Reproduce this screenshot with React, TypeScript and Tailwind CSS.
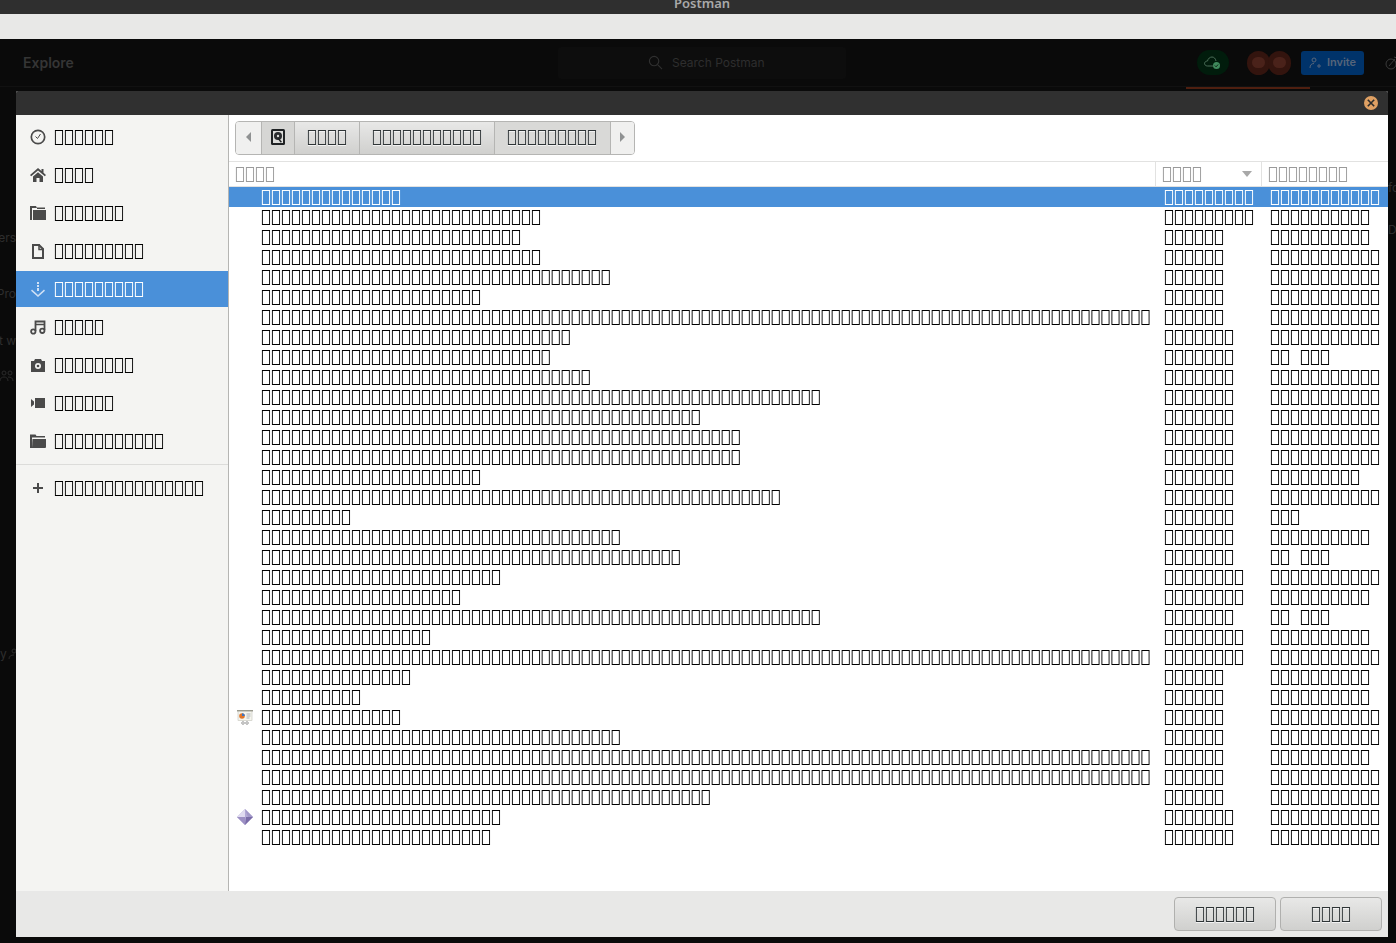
import type { ReactNode } from 'react';

// the original labels are in a script with no installed font, so they show as missing-glyph boxes
const box = (n: number) => '\uE000'.repeat(n);

const ICON_CLASS = 'w-4 h-4 shrink-0';

const ClockIcon = () => (
  <svg viewBox="0 0 16 16" className={ICON_CLASS} fill="none" stroke="#4a4a4a">
    <circle cx="8" cy="8" r="6.700" strokeWidth="1.700" />
    <path d="M5.500 7.500 7.500 9.500 10.500 5" strokeWidth="1" />
  </svg>
);
const HomeIcon = () => (
  <svg viewBox="0 0 16 16" className={ICON_CLASS} fill="#4a4a4a">
    <path d="M8 1 0 8l1.200 1.300L8 3.500l6.800 5.800L16 8l-2.500-2.200V2h-2v2.100z" />
    <path d="M3 9.500V15h3.500v-4h3v4H13V9.500L8 5.200z" />
  </svg>
);
const FolderIcon = () => (
  <svg viewBox="0 0 16 16" className={ICON_CLASS} fill="#4a4a4a">
    <path d="M0 1h6l1 2h-5v12H0z" />
    <path d="M3 5h13v10H3z" />
    <path d="M7 2.500h8V4H7z" />
  </svg>
);
const FileIcon = () => (
  <svg viewBox="0 0 16 16" className={ICON_CLASS} fill="none" stroke="#4a4a4a" strokeWidth="2">
    <path d="M3 2h6l4 4v9H3z" />
    <path d="M9 1v5.500h5" strokeWidth="1.500" />
  </svg>
);
const DownloadIcon = () => (
  <svg viewBox="0 0 16 16" className={ICON_CLASS} fill="#cfe0f5">
    <path d="M7 1h2v2H7zM7 4h2v2H7zM7 7h2v3H7z" />
    <path d="M2 8.500 8 14l6-5.500 1 1.200L8 16 1 9.700z" />
  </svg>
);
const MusicIcon = () => (
  <svg viewBox="0 0 16 16" className={ICON_CLASS} fill="none" stroke="#4a4a4a" strokeWidth="1.800">
    <path d="M5.500 12V2.500h9V11" />
    <path d="M5.500 5.500h9" strokeWidth="1.500" />
    <circle cx="3.300" cy="12.500" r="2.200" />
    <circle cx="12.300" cy="11.800" r="2.200" />
  </svg>
);
const CameraIcon = () => (
  <svg viewBox="0 0 16 16" className={ICON_CLASS}>
    <path fill="#4a4a4a" d="M1 4h3l1-2h6l1 2h3v11H1z" />
    <circle cx="8" cy="9" r="3" fill="#f4f4f2" />
    <circle cx="8" cy="9" r="1.300" fill="#4a4a4a" />
  </svg>
);
const VideoIcon = () => (
  <svg viewBox="0 0 16 16" className={ICON_CLASS} fill="#4a4a4a">
    <path d="M5 3h10v10H5z" />
    <path d="M1 4l3 2.500v3L1 12z" />
  </svg>
);
const FolderOpenIcon = () => (
  <svg viewBox="0 0 16 16" className={ICON_CLASS} fill="#4a4a4a">
    <path d="M0 1.500h5.500l1 1.500H15v1.500H2V15H0z" />
    <path d="M2.500 6H16v8.500l-1 .5H2z" />
  </svg>
);
const PlusIcon = () => (
  <svg viewBox="0 0 16 16" className={ICON_CLASS} fill="#4a4a4a">
    <path d="M7 3h2v4h4v2H9v4H7V9H3V7h4z" />
  </svg>
);
const DriveIcon = () => (
  <svg viewBox="0 0 14 16" className="w-[14px] h-4">
    <rect x="0" y="0" width="14" height="16" rx="1.500" fill="#1f2224" />
    <rect x="2" y="2" width="10" height="12" fill="#dcdcda" />
    <circle cx="7" cy="7" r="4" fill="#2a2c2e" />
    <circle cx="7" cy="7" r="1.200" fill="#dcdcda" />
    <path d="M7.500 8.500 11 13 9.500 13.500 6.500 9.500z" fill="#1f2224" />
  </svg>
);
const SlidesIcon = () => (
  <svg viewBox="0 0 16 16" className="w-4 h-4">
    <path d="M0 1h16v1.500H0z" fill="#9a9a8e" />
    <rect x="1" y="2.500" width="14" height="9" fill="#f5f5ee" stroke="#b8b8ae" strokeWidth="0.500" />
    <circle cx="5" cy="7" r="2.800" fill="#e0762a" />
    <path d="M5 7V4.200A2.800 2.800 0 0 1 7.800 7z" fill="#3d76c4" />
    <path d="M9.500 5h4M9.500 7h4M9.500 9h3" stroke="#9aa0a8" strokeWidth="0.800" />
    <circle cx="6" cy="14" r="1.300" fill="none" stroke="#777" strokeWidth="0.700" />
    <circle cx="10" cy="14" r="1.300" fill="none" stroke="#777" strokeWidth="0.700" />
  </svg>
);
const GemIcon = () => (
  <svg viewBox="0 0 16 16" className="w-4 h-4">
    <path d="M8 0 16 8 8 16 0 8z" fill="#b3a9d6" />
    <path d="M8 0 0 8h8z" fill="#e0dbf0" />
    <path d="M8 0 16 8h-5z" fill="#a298c8" />
    <path d="M8 16 0 8h8z" fill="#9d90c4" />
    <path d="M8 16l8-8H9z" fill="#7a6ca8" />
  </svg>
);

const ChevronLeft = () => <div className="w-0 h-0 border-y-[5px] border-y-transparent border-r-[5px] border-r-[#8f9192]" />;
const ChevronRight = () => <div className="w-0 h-0 border-y-[5px] border-y-transparent border-l-[5px] border-l-[#8f9192]" />;

const PLACES: { icon: ReactNode; chars: number; active?: boolean }[] = [
  { icon: <ClockIcon />, chars: 6 },
  { icon: <HomeIcon />, chars: 4 },
  { icon: <FolderIcon />, chars: 7 },
  { icon: <FileIcon />, chars: 9 },
  { icon: <DownloadIcon />, chars: 9, active: true },
  { icon: <MusicIcon />, chars: 5 },
  { icon: <CameraIcon />, chars: 8 },
  { icon: <VideoIcon />, chars: 6 },
  { icon: <FolderOpenIcon />, chars: 11 },
];

// name length, size length, date length (0 = the short date form)
const FILES: [number, number, number][] = [
  [14, 9, 11], [28, 9, 10], [26, 6, 10], [28, 6, 11], [35, 6, 11], [22, 6, 11], [89, 6, 11],
  [31, 7, 11], [29, 7, 0], [33, 7, 11], [56, 7, 11], [44, 7, 11], [48, 7, 11], [48, 7, 11],
  [22, 7, 9], [52, 7, 11], [9, 7, 3], [36, 7, 10], [42, 7, 0], [24, 8, 11], [20, 8, 10],
  [56, 7, 0], [17, 8, 10], [89, 8, 11], [15, 6, 10], [10, 6, 10], [14, 6, 11], [36, 6, 11],
  [89, 6, 10], [89, 6, 11], [45, 6, 11], [24, 7, 11], [23, 7, 11],
];

const ROW_ICONS: Record<number, ReactNode> = { 26: <SlidesIcon />, 31: <GemIcon /> };

const CRUMB = 'flex items-center h-full pb-[2px] border-r border-[#b5b5b3] [text-shadow:0_1px_0_#f2f2f2]';
const GRADIENT = 'bg-gradient-to-b from-[#e8e8e7] to-[#d0d0ce]';
const FOOT_BUTTON = 'w-[102px] h-[34px] flex items-center justify-center border border-[#b0b0ae] rounded-[4px] bg-gradient-to-b from-[#e8e8e7] to-[#d0d0ce]';

function Crumbs() {
  return (
    <div className="flex items-stretch h-[34px] w-[400px] border border-[#b5b5b3] rounded-[4px] overflow-hidden text-[#2e3436]">
      <div className={`${CRUMB} w-[26px] justify-center bg-[#f0f0ef]`}><ChevronLeft /></div>
      <div className={`${CRUMB} w-[33px] justify-center bg-[#d6d6d4]`}><DriveIcon /></div>
      <div className={`${CRUMB} ${GRADIENT} w-[65px] pl-3`}>{box(4)}</div>
      <div className={`${CRUMB} ${GRADIENT} w-[135px] pl-3`}>{box(11)}</div>
      <div className={`${CRUMB} w-[116px] pl-3 bg-[#d9d9d7]`}>{box(9)}</div>
      <div className="flex items-center justify-center flex-1 pb-[2px] bg-[#f0f0ef]"><ChevronRight /></div>
    </div>
  );
}

function Modal() {
  return (
    <div
      className="absolute left-4 top-[91px] w-[1372px] h-[846px] flex flex-col rounded-t-[2px] overflow-hidden bg-white text-[16.67px] leading-[18px] will-change-transform"
      style={{ fontFamily: '"DejaVu Sans", sans-serif' }}
    >
      <div className="h-6 shrink-0 bg-[#303030] flex items-center justify-end pr-[10px]">
        <div className="w-[14px] h-[14px] rounded-full bg-[#dfa063] flex items-center justify-center">
          <svg viewBox="0 0 10 10" className="w-2 h-2" stroke="#2b2b2b" strokeWidth="2"><path d="M1 1l8 8M9 1l-8 8" /></svg>
        </div>
      </div>

      <div className="flex flex-1 min-h-0">
        {/* Places */}
        <div className="w-[213px] shrink-0 bg-[#f4f4f2] border-r border-[#b5b5b3] pt-[4px] text-black">
          <div className="flex flex-col gap-[2px]">
            {PLACES.map((place, i) => (
              <div
                key={i}
                className={`flex items-center h-9 pl-[14px] gap-[8px] ${place.active ? 'bg-[#4a90d9] text-white' : ''}`}
              >
                {place.icon}
                <span>{box(place.chars)}</span>
              </div>
            ))}
          </div>
          <div className="h-px bg-[#dcdcda] mt-[5px]" />
          <div className="flex items-center h-9 mt-[5px] pl-[14px] gap-[8px]">
            <PlusIcon />
            <span>{box(15)}</span>
          </div>
        </div>

        {/* File list */}
        <div className="flex-1 min-w-0 flex flex-col">
          <div className="h-[46px] shrink-0 pt-[6px] pl-[6px]">
            <Crumbs />
          </div>
          <div className="flex h-[26px] shrink-0 items-center border-y border-[#e2e2e1] text-[#9a9a9a]">
            <div className="w-[926px] pl-[6px]">{box(4)}</div>
            <div className="w-[106px] h-full flex items-center justify-between border-l border-[#e2e2e1] pl-[6px] pr-[9px]">
              <span>{box(4)}</span>
              <div className="w-0 h-0 border-x-[5px] border-x-transparent border-t-[6px] border-t-[#a8a8a8]" />
            </div>
            <div className="flex-1 h-full flex items-center border-l border-[#e2e2e1] pl-[6px]">{box(8)}</div>
          </div>
          <div className="flex-1 min-h-0 text-black whitespace-pre">
            {FILES.map(([name, size, date], i) => (
              <div key={i} className={`flex h-5 items-center ${i === 0 ? 'bg-[#4a90d9] text-white' : ''}`}>
                <div className="w-[926px] flex items-center">
                  <div className="w-[32px] h-4 pl-[8px] shrink-0 flex items-center">{ROW_ICONS[i]}</div>
                  <span>{box(name)}</span>
                </div>
                <div className="w-[106px] pl-[9px]">{box(size)}</div>
                <div className="flex-1 pl-[9px]">
                  {date === 0 ? (
                    <>
                      <span>{box(2)}</span>
                      <span className="ml-[10px]">{box(3)}</span>
                    </>
                  ) : (
                    box(date)
                  )}
                </div>
              </div>
            ))}
          </div>
        </div>
      </div>

      <div className="h-[46px] shrink-0 bg-[#e8e8e7] flex items-center justify-end gap-[4px] pr-[6px] text-[#2e3436] [text-shadow:0_1px_0_#f2f2f2]">
        <div className={FOOT_BUTTON}>{box(6)}</div>
        <div className={FOOT_BUTTON}>{box(4)}</div>
      </div>
    </div>
  );
}

export default function App() {
  return (
    <div
      className="relative w-[1396px] h-[943px] overflow-hidden flex flex-col bg-[#0a0a0a]"
      style={{ fontFamily: 'Inter, sans-serif' }}
    >
      {/* Window chrome */}
      <div className="h-[14px] shrink-0 bg-[#2f2f2f] flex justify-center overflow-hidden">
        <span className="text-[13px] font-semibold leading-[7px] text-[#a9a9a9] pl-[8px]" style={{ fontFamily: '"Noto Sans", sans-serif' }}>Postman</span>
      </div>
      <div className="h-[25px] shrink-0 bg-[#e8e8e7]" />

      {/* Dimmed app behind the dialog */}
      <div className="h-[48px] shrink-0 flex items-center border-b border-[#111111] pl-[23px]">
        <div className="w-[535px] shrink-0 text-[14px] font-semibold text-[#353535]">Explore</div>
        <div className="w-[288px] h-8 shrink-0 rounded-[3px] bg-[#0d0d0d] flex items-center pl-[90px] gap-[9px] text-[12px] text-[#2e2e2e]">
          <svg viewBox="0 0 16 16" className="w-[15px] h-[15px]" fill="none" stroke="#303030" strokeWidth="1.200">
            <circle cx="6.500" cy="6.500" r="5" />
            <path d="M10.500 10.500 15 15" />
          </svg>
          <span>Search Postman</span>
        </div>
        <div className="w-[32px] h-[25px] shrink-0 ml-[351px] rounded-full bg-[#011c0c] flex items-center justify-center">
          <svg viewBox="0 0 18 14" className="w-[18px] h-[14px]" fill="none" stroke="#4c6e58" strokeWidth="1">
            <path d="M3.500 10C1.500 10 .5 8.500 .5 7.500S1.500 5 3.500 5C4 2.500 6 1 8 1s3.500 1.500 4 4" />
            <path d="M3.500 10h6" />
            <circle cx="12.500" cy="9.500" r="3.500" fill="#3f8a5c" stroke="none" />
            <path d="M10.800 9.500l1.300 1.300 2-2.300" stroke="#0e2416" />
          </svg>
        </div>
        <div className="flex shrink-0 ml-[18px]">
          <div className="w-[23px] h-[24px] rounded-full bg-[#33140e] flex items-center justify-center">
            <div className="w-[13px] h-[11px] rounded-full bg-[#4a221a]" />
          </div>
          <div className="w-[23px] h-[24px] rounded-full bg-[#33140e] -ml-[2px] flex items-center justify-center">
            <div className="w-[13px] h-[11px] rounded-full bg-[#4a221a]" />
          </div>
        </div>
        <div className="w-[63px] h-[24px] shrink-0 ml-[10px] rounded-[3px] bg-[#00336a] flex items-center justify-center gap-[6px] text-[11px] font-semibold text-[#56657a]">
          <svg viewBox="0 0 12 12" className="w-[12px] h-[12px]" fill="none" stroke="#56657a" strokeWidth="1">
            <circle cx="5" cy="3" r="2" />
            <path d="M1 11c0-3 1.500-4.500 4-4.500M8 9h4M10 7v4" />
          </svg>
          <span>Invite</span>
        </div>
        <svg viewBox="0 0 14 14" className="w-[14px] h-[14px] ml-[21px] shrink-0" fill="none" stroke="#3a3a3a" strokeWidth="1">
          <circle cx="6" cy="8" r="5" />
          <path d="M4 10 10 3M9 1a4 4 0 0 1 4 4" />
        </svg>
      </div>
      <div className="h-[2px] w-[124px] ml-[1186px] bg-[#4f1f10] shrink-0" />

      <div className="flex-1 min-h-0 flex justify-between text-[12px] text-[#2e2e2e]">
        <div className="w-4 overflow-hidden flex flex-col items-end whitespace-nowrap">
          <span className="mt-[140px]">ters</span>
          <span className="mt-[38px]">Pro</span>
          <span className="mt-[29px]">t w</span>
          <svg viewBox="0 0 14 12" className="w-[14px] h-[12px] mt-[20px] mr-[2px]" fill="none" stroke="#2a2a2a" strokeWidth="1">
            <circle cx="4" cy="3" r="2" /><circle cx="10" cy="3" r="2" />
            <path d="M0 11c0-3 2-4 4-4s4 1 4 4M8 7c3 0 5 1 5 4" />
          </svg>
          <div className="mt-[263px] w-4 flex items-center justify-between">
            <span>y</span>
            <svg viewBox="0 0 8 12" className="w-[8px] h-[12px]" fill="none" stroke="#2a2a2a" strokeWidth="1">
              <circle cx="6" cy="3" r="2" />
              <path d="M1 11c0-3 2-4 5-4" />
            </svg>
          </div>
        </div>
        <div className="w-2 overflow-hidden flex flex-col whitespace-nowrap">
          <span className="mt-[90px]">fo</span>
          <span className="mt-[24px]">DE</span>
        </div>
      </div>

      <Modal />
    </div>
  );
}
